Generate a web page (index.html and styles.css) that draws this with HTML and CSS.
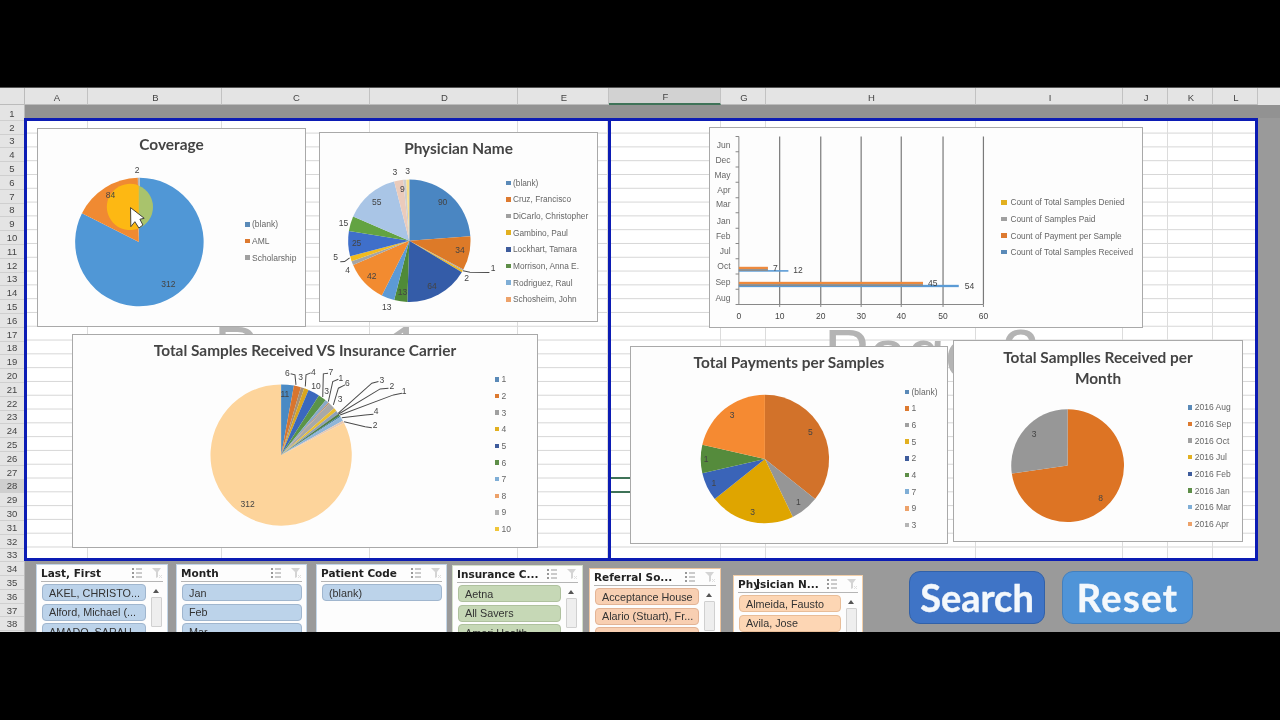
FILE: index.html
```html
<!DOCTYPE html>
<html lang="en">
<head>
<meta charset="utf-8">
<title>Samples Dashboard</title>
<link rel="stylesheet" href="styles.css">
</head>
<body>
<svg class="defs" width="0" height="0" aria-hidden="true">
  <symbol id="i-multi" viewBox="0 0 12 12"><path d="M1 2h2M1 6h2M1 10h2" stroke="#777" stroke-width="1.6"/><path d="M5 2h6M5 6h6M5 10h6" stroke="#bbb" stroke-width="1.4"/></symbol>
  <symbol id="i-clear" viewBox="0 0 12 12"><path d="M1 1h9L7 5v5L5 11V5Z" fill="#d4d4d4"/><path d="M8 8l3 3M11 8l-3 3" stroke="#e0e0e0" stroke-width="1"/></symbol>
</svg>
<div class="screen">
  <div class="colhead">
    <div class="corner"></div>
    <div class="cols">
      <span class="col w-a">A</span><span class="col w-b">B</span><span class="col w-c">C</span><span class="col w-d">D</span><span class="col w-e">E</span><span class="col w-f col-on">F</span><span class="col w-g">G</span><span class="col w-h">H</span><span class="col w-i">I</span><span class="col w-j">J</span><span class="col w-k">K</span><span class="col w-l">L</span>
    </div>
  </div>
  <div class="sheet">
    <ol class="rowhead">
      <li>1</li><li>2</li><li>3</li><li>4</li><li>5</li><li>6</li><li>7</li><li>8</li><li>9</li><li>10</li><li>11</li><li>12</li><li>13</li><li>14</li><li>15</li><li>16</li><li>17</li><li>18</li><li>19</li><li>20</li><li>21</li><li>22</li><li>23</li><li>24</li><li>25</li><li>26</li><li>27</li><li class="row-on">28</li><li>29</li><li>30</li><li>31</li><li>32</li><li>33</li><li>34</li><li>35</li><li>36</li><li>37</li><li>38</li>
    </ol>
    <div class="canvas">
      <div class="band"></div>
      <div class="frame">
        <div class="cell g-a"></div><div class="cell g-b"></div><div class="cell g-c"></div><div class="cell g-d"></div><div class="cell g-e"></div><div class="divider"></div><div class="cell g-f"></div><div class="cell g-g"></div><div class="cell g-h"></div><div class="cell g-i"></div><div class="cell g-j"></div><div class="cell g-k"></div><div class="cell g-l"></div>
      </div>

      <div class="watermark wm1">Page 1</div>
      <div class="watermark wm2">Page 2</div>
      <div class="selcell"></div>

      <article class="chart c-coverage">
        <h2 class="title">Coverage</h2>
        <svg class="art" viewBox="38.5 129.5 266 196">
          <path fill="#5097d6" d="M139 242L139.8 178A64 64 0 1 1 82.3 213.3Z"/>
          <path fill="#f08a32" d="M139 242L82.3 213.3A64 64 0 0 1 138 178Z"/>
          <path fill="#b5b5b5" d="M139 242L138 178A64 64 0 0 1 139.8 178Z"/>
          <path fill="#fdb813" d="M139 185.8A23 23 0 1 0 139 228.2Z"/>
          <path fill="#a9c36c" d="M139 185.8A23 23 0 0 1 139 228.2Z"/>
          <text class="dl" x="137.3" y="171">2</text>
          <text class="dl" x="110.7" y="196">84</text>
          <text class="dl" x="168.3" y="284.3">312</text>
          <path class="cursor" d="M130.7 207.7L131 226.7L135 221.7L139 228L143 225L140 219.3L144.3 218.3Z"/>
        </svg>
        <ul class="legend lg-coverage">
          <li><i class="sw k-blue"></i>(blank)</li>
          <li><i class="sw k-orange"></i>AML</li>
          <li><i class="sw k-gray"></i>Scholarship</li>
        </ul>
      </article>

      <article class="chart c-physician">
        <h2 class="title">Physician Name</h2>
        <svg class="art" viewBox="320.5 133.5 276 187">
          <path fill="#4a86c2" d="M409.5 240.7L409.5 179.7A61 61 0 0 1 470.3 236.1Z"/>
          <path fill="#dd7a28" d="M409.5 240.7L470.3 236.1A61 61 0 0 1 463.3 269.4Z"/>
          <path fill="#a5a5a5" d="M409.5 240.7L463.3 269.4A61 61 0 0 1 462.8 270.3Z"/>
          <path fill="#f0b820" d="M409.5 240.7L462.8 270.3A61 61 0 0 1 461.8 272.1Z"/>
          <path fill="#345ca8" d="M409.5 240.7L461.8 272.1A61 61 0 0 1 407.5 301.7Z"/>
          <path fill="#4f8a38" d="M409.5 240.7L407.5 301.7A61 61 0 0 1 394.4 299.8Z"/>
          <path fill="#5c9ad6" d="M409.5 240.7L394.4 299.8A61 61 0 0 1 382.1 295.2Z"/>
          <path fill="#f28b30" d="M409.5 240.7L382.1 295.2A61 61 0 0 1 353.5 264.9Z"/>
          <path fill="#a5a5a5" d="M409.5 240.7L353.5 264.9A61 61 0 0 1 352 261.1Z"/>
          <path fill="#f2bb1e" d="M409.5 240.7L352 261.1A61 61 0 0 1 350.5 256.2Z"/>
          <path fill="#3f6fca" d="M409.5 240.7L350.5 256.2A61 61 0 0 1 349.3 231.1Z"/>
          <path fill="#63a342" d="M409.5 240.7L349.3 231.1A61 61 0 0 1 353.5 216.5Z"/>
          <path fill="#a9c5e6" d="M409.5 240.7L353.5 216.5A61 61 0 0 1 394.4 181.6Z"/>
          <path fill="#ebcbbb" d="M409.5 240.7L394.4 181.6A61 61 0 0 1 403.4 180Z"/>
          <path fill="#cfcfcf" d="M409.5 240.7L403.4 180A61 61 0 0 1 406.5 179.8Z"/>
          <path fill="#fbe08a" d="M409.5 240.7L406.5 179.8A61 61 0 0 1 409.5 179.7Z"/>
          <path class="leader" d="M463 270.7L470 272L489.3 272.3M340.7 261.7L345 261.5L350 257.7"/>
          <text class="dl" x="442.7" y="203.3">90</text>
          <text class="dl" x="460" y="251">34</text>
          <text class="dl" x="432" y="287">64</text>
          <text class="dl" x="402.7" y="292.7">13</text>
          <text class="dl" x="387" y="307">13</text>
          <text class="dl" x="372" y="277">42</text>
          <text class="dl" x="348" y="270.7">4</text>
          <text class="dl" x="336" y="258">5</text>
          <text class="dl" x="357" y="244">25</text>
          <text class="dl" x="344" y="224">15</text>
          <text class="dl" x="377" y="203">55</text>
          <text class="dl" x="402.7" y="190">9</text>
          <text class="dl" x="395" y="173">3</text>
          <text class="dl" x="407.7" y="171.7">3</text>
          <text class="dl" x="493" y="269">1</text>
          <text class="dl" x="466.7" y="279">2</text>
        </svg>
        <ul class="legend lg-physician">
          <li><i class="sw k-blue"></i>(blank)</li>
          <li><i class="sw k-orange"></i>Cruz, Francisco</li>
          <li><i class="sw k-gray"></i>DiCarlo, Christopher</li>
          <li><i class="sw k-yellow"></i>Gambino, Paul</li>
          <li><i class="sw k-navy"></i>Lockhart, Tamara</li>
          <li><i class="sw k-green"></i>Morrison, Anna E.</li>
          <li><i class="sw k-sky"></i>Rodriguez, Raul</li>
          <li><i class="sw k-peach"></i>Schosheim, John</li>
        </ul>
      </article>

      <article class="chart c-insurance">
        <h2 class="title">Total Samples Received VS Insurance Carrier</h2>
        <svg class="art" viewBox="73.5 335.5 463 211">
          <path fill="#fdd49b" d="M281.2 455L343.9 422.8A70.5 70.5 0 1 1 281.2 384.5Z"/>
          <path fill="#4a8ac4" d="M281.2 455L281.2 384.5A70.5 70.5 0 0 1 294 385.7Z"/>
          <path fill="#d9752e" d="M281.2 455L294 385.7A70.5 70.5 0 0 1 300.9 387.3Z"/>
          <path fill="#a68f74" d="M281.2 455L300.9 387.3A70.5 70.5 0 0 1 304.2 388.4Z"/>
          <path fill="#d9a520" d="M281.2 455L304.2 388.4A70.5 70.5 0 0 1 308.6 390Z"/>
          <path fill="#3b68bd" d="M281.2 455L308.6 390A70.5 70.5 0 0 1 318.9 395.5Z"/>
          <path fill="#5a9448" d="M281.2 455L318.9 395.5A70.5 70.5 0 0 1 325.6 400.3Z"/>
          <path fill="#8aa9c8" d="M281.2 455L325.6 400.3A70.5 70.5 0 0 1 328.3 402.5Z"/>
          <path fill="#c08a60" d="M281.2 455L328.3 402.5A70.5 70.5 0 0 1 329.2 403.3Z"/>
          <path fill="#a8a8a8" d="M281.2 455L329.2 403.3A70.5 70.5 0 0 1 334.1 408.3Z"/>
          <path fill="#e8bd30" d="M281.2 455L334.1 408.3A70.5 70.5 0 0 1 336.3 411Z"/>
          <path fill="#8f9fb8" d="M281.2 455L336.3 411A70.5 70.5 0 0 1 338.4 413.9Z"/>
          <path fill="#4d7d40" d="M281.2 455L338.4 413.9A70.5 70.5 0 0 1 339.8 415.8Z"/>
          <path fill="#3a7a9a" d="M281.2 455L339.8 415.8A70.5 70.5 0 0 1 340.4 416.7Z"/>
          <path fill="#8fb5d8" d="M281.2 455L340.4 416.7A70.5 70.5 0 0 1 342.8 420.8Z"/>
          <path fill="#e8c8b0" d="M281.2 455L342.8 420.8A70.5 70.5 0 0 1 343.9 422.8Z"/>
          <path class="leader" d="M290.7 374L295 375L296 385M310.7 373L306 375L305.3 386.7M328 373.5L323.3 374L322.7 397M338.3 379.3L332.7 381.7L328.3 401.7M345 385L338.3 388.3L333.3 405M378.3 381.7L371.7 383.3L338.3 413.3M388.3 388.3L380 389L338.3 414.3M401.7 393.3L393.3 395L340 415M373.3 414.3L365 415L341.7 417.7M371.7 427.7L365 426.7L344 421.7"/>
          <text class="dl" x="287.3" y="374">6</text>
          <text class="dl" x="300.7" y="377.7">3</text>
          <text class="dl" x="313.3" y="373">4</text>
          <text class="dl" x="316" y="386.7">10</text>
          <text class="dl" x="330.7" y="373">7</text>
          <text class="dl" x="326.7" y="392.3">3</text>
          <text class="dl" x="340.7" y="379">1</text>
          <text class="dl" x="347.3" y="384">6</text>
          <text class="dl" x="340" y="399.7">3</text>
          <text class="dl" x="381.7" y="380.7">3</text>
          <text class="dl" x="391.7" y="386.7">2</text>
          <text class="dl" x="404" y="391.7">1</text>
          <text class="dl" x="376" y="412.3">4</text>
          <text class="dl" x="375" y="426">2</text>
          <text class="dl" x="285" y="395">11</text>
          <text class="dl" x="247.7" y="504.3">312</text>
        </svg>
        <ul class="legend lg-insurance">
          <li><i class="sw k-blue"></i>1</li>
          <li><i class="sw k-orange"></i>2</li>
          <li><i class="sw k-gray"></i>3</li>
          <li><i class="sw k-yellow"></i>4</li>
          <li><i class="sw k-navy"></i>5</li>
          <li><i class="sw k-green"></i>6</li>
          <li><i class="sw k-sky"></i>7</li>
          <li><i class="sw k-peach"></i>8</li>
          <li><i class="sw k-lgray"></i>9</li>
          <li><i class="sw k-lyellow"></i>10</li>
        </ul>
      </article>

      <article class="chart c-bars">
        <svg class="art" viewBox="710.5 128.5 431 198">
          <path class="gridline" d="M780 136.7V304.3M821 136.7V304.3M861.3 136.7V304.3M901.3 136.7V304.3M943 136.7V304.3M983.3 136.7V304.3"/>
          <path class="axis" d="M739.3 136.7V304.3H983.3M736 136.7h3.3M736 152h3.3M736 167.2h3.3M736 182.4h3.3M736 197.7h3.3M736 212.9h3.3M736 228.2h3.3M736 243.4h3.3M736 258.6h3.3M736 273.9h3.3M736 289.1h3.3M736 304.3h3.3M780 304.3v2.5M821 304.3v2.5M861.3 304.3v2.5M901.3 304.3v2.5M943 304.3v2.5M983.3 304.3v2.5"/>
          <rect fill="#ed8a3e" x="739.3" y="266.7" width="29" height="2.4"/>
          <rect fill="#5b9bd5" x="739.3" y="270" width="49.4" height="1.6"/>
          <rect fill="#8a8a8a" x="739.3" y="269" width="29" height="1.8"/>
          <rect fill="#ed8a3e" x="739.3" y="281.7" width="183.7" height="2.4"/>
          <rect fill="#5b9bd5" x="739.3" y="284.7" width="219.4" height="2.3"/>
          <rect fill="#8a8a8a" x="739.3" y="284" width="183.7" height="1.8"/>
          <text class="dl" x="775.7" y="269">7</text>
          <text class="dl" x="798.3" y="271">12</text>
          <text class="dl" x="932.7" y="283.7">45</text>
          <text class="dl" x="969.3" y="287">54</text>
          <g class="cats">
            <text x="731" y="145.7">Jun</text><text x="731" y="160.7">Dec</text><text x="731" y="175.7">May</text><text x="731" y="190.7">Apr</text><text x="731" y="205.3">Mar</text><text x="731" y="221.3">Jan</text><text x="731" y="236.3">Feb</text><text x="731" y="251.3">Jul</text><text x="731" y="266.3">Oct</text><text x="731" y="282.3">Sep</text><text x="731" y="298.3">Aug</text>
          </g>
          <text class="dl" x="739.3" y="316.7">0</text>
          <text class="dl" x="780" y="316.7">10</text>
          <text class="dl" x="821" y="316.7">20</text>
          <text class="dl" x="861.3" y="316.7">30</text>
          <text class="dl" x="901.3" y="316.7">40</text>
          <text class="dl" x="943" y="316.7">50</text>
          <text class="dl" x="983.3" y="316.7">60</text>
        </svg>
        <ul class="legend lg-bars">
          <li><i class="sw sw-wide k-yellow"></i>Count of Total Samples Denied</li>
          <li><i class="sw sw-wide k-gray"></i>Count of Samples Paid</li>
          <li><i class="sw sw-wide k-orange"></i>Count of Payment per Sample</li>
          <li><i class="sw sw-wide k-blue"></i>Count of Total Samples Received</li>
        </ul>
      </article>

      <article class="chart c-payments">
        <h2 class="title">Total Payments per Samples</h2>
        <svg class="art" viewBox="631.5 347.5 315 195">
          <path fill="#d2722a" d="M765 459L765 395A64 64 0 0 1 815 498.9Z"/>
          <path fill="#969696" d="M765 459L815 498.9A64 64 0 0 1 792.8 516.7Z"/>
          <path fill="#dfa500" d="M765 459L792.8 516.7A64 64 0 0 1 715 498.9Z"/>
          <path fill="#3a64b8" d="M765 459L715 498.9A64 64 0 0 1 702.6 473.2Z"/>
          <path fill="#558b3c" d="M765 459L702.6 473.2A64 64 0 0 1 702.6 444.8Z"/>
          <path fill="#f58a32" d="M765 459L702.6 444.8A64 64 0 0 1 765 395Z"/>
          <text class="dl" x="732.3" y="416">3</text>
          <text class="dl" x="810.3" y="432.7">5</text>
          <text class="dl" x="798.3" y="502.3">1</text>
          <text class="dl" x="752.7" y="512.3">3</text>
          <text class="dl" x="714" y="484">1</text>
          <text class="dl" x="706.3" y="459.3">1</text>
        </svg>
        <ul class="legend lg-payments">
          <li><i class="sw k-blue"></i>(blank)</li>
          <li><i class="sw k-orange"></i>1</li>
          <li><i class="sw k-gray"></i>6</li>
          <li><i class="sw k-yellow"></i>5</li>
          <li><i class="sw k-navy"></i>2</li>
          <li><i class="sw k-green"></i>4</li>
          <li><i class="sw k-sky"></i>7</li>
          <li><i class="sw k-peach"></i>9</li>
          <li><i class="sw k-lgray"></i>3</li>
        </ul>
      </article>

      <article class="chart c-month">
        <h2 class="title">Total Samplles Received per Month</h2>
        <svg class="art" viewBox="954.5 341.5 287 199">
          <path fill="#dd7424" d="M1067.7 465.5L1067.7 409.3A56.2 56.2 0 1 1 1012.1 473.5Z"/>
          <path fill="#979797" d="M1067.7 465.5L1012.1 473.5A56.2 56.2 0 0 1 1067.7 409.3Z"/>
          <text class="dl" x="1034.3" y="434.3">3</text>
          <text class="dl" x="1100.7" y="499">8</text>
        </svg>
        <ul class="legend lg-month">
          <li><i class="sw k-blue"></i>2016 Aug</li>
          <li><i class="sw k-orange"></i>2016 Sep</li>
          <li><i class="sw k-gray"></i>2016 Oct</li>
          <li><i class="sw k-yellow"></i>2016 Jul</li>
          <li><i class="sw k-navy"></i>2016 Feb</li>
          <li><i class="sw k-green"></i>2016 Jan</li>
          <li><i class="sw k-sky"></i>2016 Mar</li>
          <li><i class="sw k-peach"></i>2016 Apr</li>
        </ul>
      </article>

      <div class="tray">
        <section class="slicer sl-1 th-blue">
          <header class="slhead"><h3>Last, First</h3><svg class="ic"><use href="#i-multi"/></svg><svg class="ic"><use href="#i-clear"/></svg></header>
          <div class="slbody">
            <ul class="items"><li>AKEL, CHRISTO...</li><li>Alford, Michael (...</li><li>AMADO, SARAH</li></ul>
            <div class="scroll"><i class="up"></i><i class="thumb"></i></div>
          </div>
        </section>
        <section class="slicer sl-2 th-blue">
          <header class="slhead"><h3>Month</h3><svg class="ic"><use href="#i-multi"/></svg><svg class="ic"><use href="#i-clear"/></svg></header>
          <div class="slbody">
            <ul class="items"><li>Jan</li><li>Feb</li><li>Mar</li></ul>
          </div>
        </section>
        <section class="slicer sl-3 th-blue">
          <header class="slhead"><h3>Patient Code</h3><svg class="ic"><use href="#i-multi"/></svg><svg class="ic"><use href="#i-clear"/></svg></header>
          <div class="slbody">
            <ul class="items"><li>(blank)</li></ul>
          </div>
        </section>
        <section class="slicer sl-4 th-green">
          <header class="slhead"><h3>Insurance C...</h3><svg class="ic"><use href="#i-multi"/></svg><svg class="ic"><use href="#i-clear"/></svg></header>
          <div class="slbody">
            <ul class="items"><li>Aetna</li><li>All Savers</li><li>Ameri Health</li></ul>
            <div class="scroll"><i class="up"></i><i class="thumb"></i></div>
          </div>
        </section>
        <section class="slicer sl-5 th-orange">
          <header class="slhead"><h3>Referral So...</h3><svg class="ic"><use href="#i-multi"/></svg><svg class="ic"><use href="#i-clear"/></svg></header>
          <div class="slbody">
            <ul class="items"><li>Acceptance House</li><li>Alario (Stuart), Fr...</li><li>Baldwin, Fr...</li></ul>
            <div class="scroll"><i class="up"></i><i class="thumb"></i></div>
          </div>
        </section>
        <section class="slicer sl-6 th-peach">
          <header class="slhead"><h3>Physician N...</h3><svg class="ic"><use href="#i-multi"/></svg><svg class="ic"><use href="#i-clear"/></svg></header>
          <div class="slbody">
            <ul class="items"><li>Almeida, Fausto</li><li>Avila, Jose</li></ul>
            <div class="scroll"><i class="up"></i><i class="thumb"></i></div>
          </div>
        </section>
        <div class="actions">
          <button class="btn btn-search">Search</button>
          <button class="btn btn-reset">Reset</button>
        </div>
      </div>
      <i class="ibeam"></i>
    </div>
  </div>
</div>
</body>
</html>
```
FILE: styles.css
```css
* { box-sizing: border-box; }
html, body { margin: 0; height: 100%; background: #000; overflow: hidden; }
.defs { position: absolute; }
ul, ol { list-style: none; margin: 0; padding: 0; }

.screen {
  margin-top: 87px;
  height: 545px;
  display: flex;
  flex-direction: column;
  overflow: hidden;
  background: #9a9a9a;
  font-family: "Liberation Sans", Arial, sans-serif;
  filter: blur(0.35px);
}

/* column header */
.colhead { display: flex; height: 18px; flex: none; background: #e4e4e4; border-top: 1px solid #555; }
.corner { width: 25px; flex: none; border-right: 1px solid #bbb; border-bottom: 1px solid #bbb; }
.cols { display: flex; flex: 1; }
.col {
  display: flex; align-items: center; justify-content: center;
  padding: 2px 0 0 2px;
  font-size: 9.5px; color: #444;
  border-right: 1px solid #c2c2c2; border-bottom: 1px solid #bbb;
}
.col-on { background: #d2d2d2; border-bottom: 2px solid #3f7358; }
.w-a { width: 63px; } .w-b { width: 134px; } .w-c { width: 148px; } .w-d { width: 148px; }
.w-e { width: 91px; } .w-f { width: 112px; } .w-g { width: 45px; } .w-h { width: 210px; }
.w-i { width: 147px; } .w-j { width: 45px; } .w-k { width: 45px; } .w-l { width: 45px; }

.sheet { display: flex; flex: 1; min-height: 0; }

/* row header */
.rowhead { width: 25px; flex: none; padding-top: 2px; background: #e4e4e4; border-right: 1px solid #bbb; }
.rowhead li {
  height: 13.8px; display: flex; align-items: center; justify-content: center;
  font-size: 9.5px; color: #444; border-bottom: 1px solid #cfcfcf;
}
.rowhead .row-on { background: #cfcfcf; }

/* sheet body */
.canvas { flex: 1; position: relative; display: flex; flex-direction: column; min-width: 0; }
.band { height: 13px; flex: none; background: #929292; }
.frame {
  flex: none; width: 1234px; height: 443px; margin-left: -1px;
  display: flex;
  border: 3px solid #0c1cb4;
  background-color: #fff;
  background-image: linear-gradient(to bottom, #d6d6d6 1px, transparent 1px);
  background-size: 100% 13.8px;
  background-position: 0 11.6px;
}
.cell { border-right: 1px solid #dcdcdc; }
.g-a { width: 61px; } .g-b { width: 134px; } .g-c { width: 148px; } .g-d { width: 148px; }
.g-e { width: 90px; } .g-f { width: 110px; } .g-g { width: 45px; } .g-h { width: 210px; }
.g-i { width: 147px; } .g-j { width: 45px; } .g-k { width: 45px; } .g-l { flex: 1; border-right: 0; }
.divider { width: 3px; background: #0c1cb4; flex: none; }

.watermark {
  position: absolute; font-size: 66px; line-height: 1; color: #b4b4b4; white-space: nowrap;
}
.wm1 { left: 189px; top: 212px; }
.wm2 { left: 799px; top: 214px; font-size: 68px; }

.selcell {
  position: absolute; left: 586px; top: 372px; width: 20px; height: 16px;
  border-top: 2px solid #3f7358; border-bottom: 2px solid #3f7358;
}

/* charts */
.chart {
  position: absolute;
  background: #fdfdfd;
  border: 1.5px solid #a9a9a9;
  text-align: center;
}
.art { position: absolute; left: 0; top: 0; width: 100%; height: 100%; }
.title {
  position: relative;
  margin: 0; padding-top: 5px;
  font: 700 15.4px/20.7px Lato, "Open Sans", sans-serif;
  color: #444;
}
.c-coverage  { left: 12px;  top: 23px;  width: 269px; height: 199px; }
.c-physician { left: 294px; top: 27px;  width: 279px; height: 190px; }
.c-insurance { left: 47px;  top: 229px; width: 466px; height: 214px; }
.c-bars      { left: 684px; top: 22px;  width: 434px; height: 201px; }
.c-payments  { left: 605px; top: 241px; width: 318px; height: 198px; }
.c-month     { left: 928px; top: 235px; width: 290px; height: 202px; }
.c-month .title { padding: 6px 40px 0; }

.dl, .cats text { font: 8.5px "Liberation Sans", Arial, sans-serif; fill: #444; dominant-baseline: middle; }
.dl { text-anchor: middle; }
.cats text { text-anchor: end; fill: #666; }
.leader { fill: none; stroke: #4a4a4a; stroke-width: 1; }
.gridline { fill: none; stroke: #7a7a7a; stroke-width: 1.2; }
.axis { fill: none; stroke: #888; stroke-width: 1; }
.cursor { fill: #fff; stroke: #333; stroke-width: 0.9; }

.legend { position: absolute; text-align: left; font-size: 8.5px; color: #666; }
.legend li { height: 16.65px; display: flex; align-items: center; gap: 2.5px; white-space: nowrap; }
.sw { width: 4.5px; height: 4.5px; flex: none; }
.sw-wide { width: 5.5px; height: 4.5px; margin-right: 1.5px; }
.k-blue { background: #5a8ab8; } .k-orange { background: #dd7a30; } .k-gray { background: #a0a0a0; }
.k-yellow { background: #e2b020; } .k-navy { background: #3e5c9c; } .k-green { background: #5e8e48; }
.k-sky { background: #7faed6; } .k-peach { background: #eda26a; } .k-lgray { background: #b5b5b5; }
.k-lyellow { background: #f0c63a; }
.lg-coverage  { left: 207px;   top: 87px; }
.lg-physician { left: 186px;   top: 41.5px; font-size: 8.3px; }
.lg-insurance { left: 421.5px; top: 36px; }
.lg-bars      { left: 291px;   top: 66px; font-size: 8.3px; }
.lg-payments  { left: 273.5px; top: 36.5px; }
.lg-month     { left: 233.8px; top: 58px; }

/* slicers */
.tray { flex: 1; display: flex; align-items: flex-start; padding-left: 11px; overflow: hidden; min-height: 0; }
.slicer { flex: none; height: 90px; background: #fdfdfd; border: 1px solid var(--edge); padding: 0 4px 0 4px; }
.sl-1 { width: 132px; margin-top: 3px; }
.sl-2 { width: 131px; margin: 3px 0 0 8px; }
.sl-3 { width: 131px; margin: 3px 0 0 9px; }
.sl-4 { width: 131px; margin: 4px 0 0 5px; }
.sl-5 { width: 132px; margin: 7px 0 0 6px; }
.sl-6 { width: 130px; margin: 14px 0 0 12px; }
.th-blue   { --edge: #c3d6e8; --fill: #bcd3ea; --line: #a0b6ce; }
.th-green  { --edge: #d3dfc8; --fill: #c6d8b6; --line: #afc19e; }
.th-orange { --edge: #efc6a0; --fill: #f8cfb2; --line: #e3b496; }
.th-peach  { --edge: #f3cfa8; --fill: #fdd6b4; --line: #e8bd98; }

.slhead { display: flex; align-items: center; gap: 8px; height: 17px; border-bottom: 1px solid #b5b5b5; }
.slhead h3 { margin: 0; flex: 1; min-width: 0; font: 700 10.5px "DejaVu Sans", Verdana, sans-serif; color: #222; white-space: nowrap; }
.ic { width: 12px; height: 12px; flex: none; }
.slbody { display: flex; gap: 3px; padding: 2px 0 0 1px; }
.items { flex: 1; display: flex; flex-direction: column; gap: 2.5px; min-width: 0; }
.items li {
  height: 17px; display: flex; align-items: center; padding-left: 6px;
  font-size: 10.8px; color: #333; white-space: nowrap;
  background: var(--fill); border: 1px solid var(--line); border-radius: 4px;
}
.scroll { width: 14px; flex: none; display: flex; flex-direction: column; align-items: center; gap: 4px; padding-top: 5px; }
.up { width: 0; height: 0; border: 3.5px solid transparent; border-top: 0; border-bottom: 4px solid #555; }
.thumb { width: 11px; height: 30px; background: #eeeeee; border: 1px solid #d0d0d0; border-radius: 1px; }

.actions { display: flex; gap: 17px; margin: 10px 0 0 46px; }
.btn {
  width: 136px; height: 53px; padding: 0 0 2px;
  font: 700 38px/1 Lato, "Open Sans", sans-serif; color: #f4f8fc;
  -webkit-text-stroke: 0.4px #f4f8fc;
  border-radius: 11px;
}
.btn-search { background: #3f74c6; border: 1px solid #3261a8; }
.btn-reset  { width: 131px; letter-spacing: 1.4px; background: #4f94d8; border: 1px solid #4480bd; }

.ibeam { position: absolute; left: 732px; top: 474px; width: 1.5px; height: 10px; background: #222; }
```
